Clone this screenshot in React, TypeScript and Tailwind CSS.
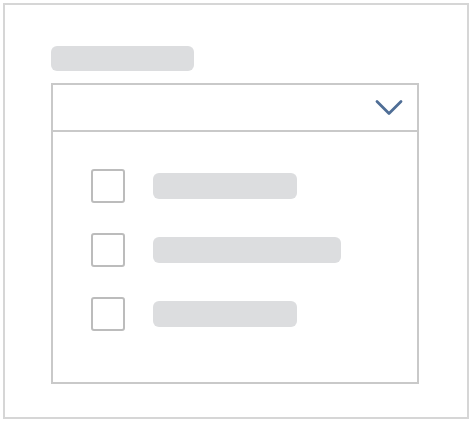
export default function App() {
  const rows = [144, 188, 144];
  return (
    <div className="w-[474px] h-[424px] bg-white p-[3px]">
      <div className="w-[466px] h-[416px] border-2 border-[#d6d6d6] bg-white pl-[46px] pt-[41px]">
        <div className="w-[143px] h-[25px] rounded-[6px] bg-[#dcdddf]" />
        <div className="mt-[12px] w-[368px] h-[301px] border-2 border-[#c9c9c9] flex flex-col">
          <div className="h-[47px] border-b-2 border-[#c9c9c9] flex items-center justify-end pr-[14px]">
            <svg width="28" height="17" viewBox="0 0 28 17" fill="none">
              <path d="M2 2.5 L14 14.5 L26 2.5" stroke="#4f6e96" strokeWidth="2.8" strokeLinecap="round" strokeLinejoin="round" />
            </svg>
          </div>
          <div className="flex flex-col gap-[30px] pl-[38px] pt-[37px]">
            {rows.map((w, i) => (
              <div key={i} className="flex items-center gap-[28px]">
                <div className="w-[34px] h-[34px] rounded-[3px] border-2 border-[#bcbcbc] bg-white" />
                <div className="h-[26px] rounded-[6px] bg-[#dcdddf]" style={{ width: w }} />
              </div>
            ))}
          </div>
        </div>
      </div>
    </div>
  );
}
